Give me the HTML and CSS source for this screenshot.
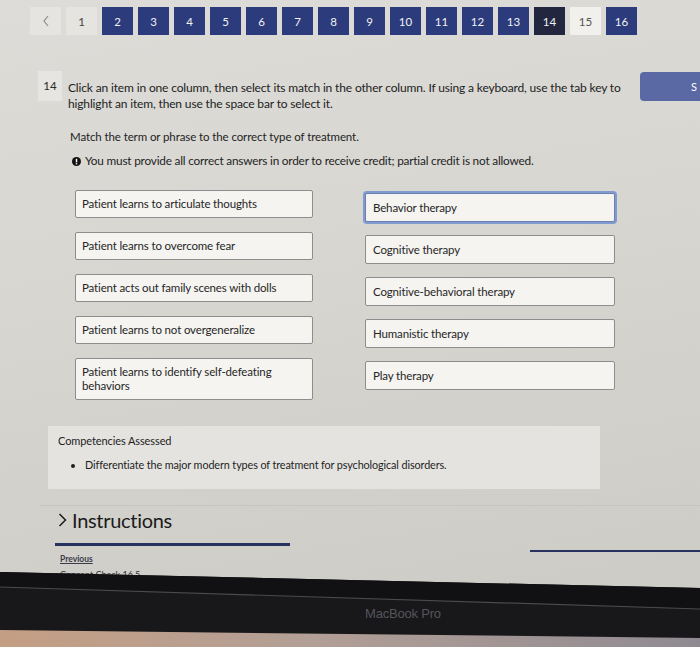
FILE: index.html
```html
<!DOCTYPE html>
<html lang="en">
<head>
<meta charset="utf-8">
<title>Question 14</title>
<link rel="stylesheet" href="styles.css">
</head>
<body>
<div class="screen">
  <nav class="pager">
    <span class="pg pg-light pg-prev"><svg width="8" height="12" viewBox="0 0 8 12"><polyline points="6,1 2,6 6,11" fill="none" stroke="#8a8a8a" stroke-width="1.2"/></svg></span>
    <span class="pg pg-light">1</span>
    <span class="pg">2</span>
    <span class="pg">3</span>
    <span class="pg">4</span>
    <span class="pg">5</span>
    <span class="pg">6</span>
    <span class="pg">7</span>
    <span class="pg">8</span>
    <span class="pg">9</span>
    <span class="pg">10</span>
    <span class="pg">11</span>
    <span class="pg">12</span>
    <span class="pg">13</span>
    <span class="pg pg-current">14</span>
    <span class="pg pg-white">15</span>
    <span class="pg">16</span>
  </nav>

  <section class="question">
    <div class="qnum">14</div>
    <div class="qbody">
      <p class="prompt">Click an item in one column, then select its match in the other column. If using a keyboard, use the tab key to highlight an item, then use the space bar to select it.</p>
      <p class="instr">Match the term or phrase to the correct type of treatment.</p>
      <p class="note"><svg class="note-icon" width="9" height="9" viewBox="0 0 10 10"><circle cx="5" cy="5" r="5" fill="#111"/><rect x="4.2" y="2" width="1.6" height="4" fill="#fff"/><rect x="4.2" y="6.9" width="1.6" height="1.4" fill="#fff"/></svg>You must provide all correct answers in order to receive credit; partial credit is not allowed.</p>
      <div class="match">
        <div class="col col-left">
          <div class="item">Patient learns to articulate thoughts</div>
          <div class="item">Patient learns to overcome fear</div>
          <div class="item">Patient acts out family scenes with dolls</div>
          <div class="item">Patient learns to not overgeneralize</div>
          <div class="item item-tall">Patient learns to identify self-defeating behaviors</div>
        </div>
        <div class="col col-right">
          <div class="item item-focus">Behavior therapy</div>
          <div class="item">Cognitive therapy</div>
          <div class="item">Cognitive-behavioral therapy</div>
          <div class="item">Humanistic therapy</div>
          <div class="item">Play therapy</div>
        </div>
      </div>
    </div>
    <div class="side-btn">S</div>
  </section>

  <section class="competencies">
    <p class="comp-title">Competencies Assessed</p>
    <ul class="comp-list">
      <li>Differentiate the major modern types of treatment for psychological disorders.</li>
    </ul>
  </section>

  <div class="sep"></div>

  <section class="instructions">
    <h2 class="instr-head"><svg class="chev" width="9" height="16" viewBox="0 0 9 16"><polyline points="1.5,2 7.5,8 1.5,14" fill="none" stroke="#1c1c1c" stroke-width="1.5"/></svg>Instructions</h2>
    <div class="bars"><span class="bar bar-left"></span><span class="bar bar-right"></span></div>
    <a class="prev" href="#">Previous</a>
    <div class="concept">Concept Check 16.5</div>
  </section>

  <div class="bezel">
    <svg class="bezel-art" width="700" height="80" viewBox="0 0 700 80">
      <defs>
        <linearGradient id="strip" x1="0" y1="0" x2="1" y2="0">
          <stop offset="0" stop-color="#c49e83"/>
          <stop offset="0.45" stop-color="#b29f96"/>
          <stop offset="1" stop-color="#8f8a92"/>
        </linearGradient>
      </defs>
      <polygon points="0,3 700,19 700,80 0,80" fill="#18181a"/>
      <polygon points="0,3 700,19 700,40 0,18" fill="#111113"/>
      <polyline points="0,18 700,40" fill="none" stroke="#4a4a4d" stroke-width="1.2"/>
      <polygon points="0,61 700,69 700,80 0,80" fill="url(#strip)"/>
    </svg>
    <span class="bezel-label">MacBook Pro</span>
  </div>
</div>
</body>
</html>
```

FILE: styles.css
```css
* { box-sizing: border-box; }

html, body {
  margin: 0;
  padding: 0;
}

body {
  width: 700px;
  height: 647px;
  overflow: hidden;
  font-family: "Lato", "Open Sans", sans-serif;
  color: #1e1e1e;
}

.screen {
  position: relative;
  width: 700px;
  height: 647px;
  overflow: hidden;
  background: linear-gradient(170deg, #dddcd8 0%, #d6d5d0 45%, #cbcac5 100%);
}

/* pager */
.pager {
  display: flex;
  gap: 5px;
  padding: 7px 0 0 30px;
}

.pg {
  width: 31px;
  height: 28px;
  display: flex;
  align-items: center;
  justify-content: center;
  background: #2c3b7b;
  color: #f2f2f4;
  font-size: 11.5px;
}

.pg-light {
  background: #e5e4e0;
  color: #444;
}

.pg-white {
  background: #f1f0ed;
  color: #555;
}

.pg-current {
  background: #22273f;
}

/* question */
.question {
  display: flex;
  align-items: flex-start;
  margin-top: 35px;
  padding-left: 38px;
}

.qnum {
  flex: 0 0 24px;
  height: 30px;
  background: #e6e5e1;
  display: flex;
  justify-content: center;
  padding-top: 8px;
  font-size: 11.5px;
  color: #2a2a2a;
  margin-top: 1px;
}

.qbody {
  flex: 0 0 570px;
  margin-left: 6px;
  padding-top: 10px;
}

.prompt {
  margin: 0;
  width: 565px;
  font-size: 12px;
  line-height: 16px;
  letter-spacing: -0.15px;
  color: #222;
}

.instr {
  margin: 17px 0 0 2px;
  font-size: 11.5px;
  line-height: 16px;
  letter-spacing: -0.1px;
}

.note {
  margin: 8px 0 0 4px;
  font-size: 11.8px;
  line-height: 16px;
  letter-spacing: -0.2px;
  display: flex;
  align-items: center;
}

.note-icon {
  margin-right: 4px;
}

.match {
  display: flex;
  gap: 52px;
  margin: 21px 0 0 7px;
}

.col {
  display: flex;
  flex-direction: column;
  gap: 14px;
}

.col-left { width: 238px; }

.col-right {
  width: 250px;
  padding-top: 3px;
  gap: 13px;
}

.item {
  height: 29px;
  display: flex;
  align-items: center;
  padding: 0 6px;
  background: #f5f4f1;
  border: 1px solid #8d8d8d;
  border-radius: 2px;
  font-size: 11.5px;
  line-height: 14px;
  letter-spacing: -0.15px;
  color: #262626;
}

.col-right .item { padding-left: 7px; }

.col-left .item { height: 28px; }

.col-left .item-tall {
  height: 42px;
  padding-right: 40px;
}

.item-focus {
  border: 1px solid #6b7fb0;
  box-shadow: 0 0 0 2px #7f9bd0;
}

.side-btn {
  flex: 0 0 70px;
  height: 29px;
  margin: 2px -10px 0 auto;
  background: #5a69a4;
  border-radius: 4px;
  color: #fff;
  font-size: 11px;
  display: flex;
  align-items: center;
  padding-left: 51px;
}

/* competencies */
.competencies {
  margin: 26px 0 0 48px;
  width: 552px;
  height: 63px;
  background: #e4e3df;
  padding: 8px 10px 0 10px;
}

.comp-title {
  margin: 0;
  font-size: 11px;
  line-height: 14px;
  letter-spacing: -0.1px;
}

.comp-list {
  margin: 10px 0 0 0;
  padding-left: 27px;
  font-size: 10.8px;
  line-height: 14px;
  letter-spacing: -0.1px;
}

.sep {
  height: 1px;
  margin: 16px 0 0 40px;
  background: #c6c5c0;
}

/* instructions */
.instructions {
  padding-left: 55px;
}

.instr-head {
  margin: 1px 0 0 3px;
  display: flex;
  align-items: center;
  gap: 5px;
  font-size: 20px;
  font-weight: 400;
  line-height: 26px;
  letter-spacing: -0.3px;
  color: #1b1b1b;
}

.bars {
  display: flex;
  align-items: flex-start;
  margin-top: 10px;
}

.bar {
  flex: 0 0 auto;
  height: 3px;
  background: #27325f;
}

.bar-left { width: 235px; }

.bar-right {
  width: 180px;
  margin: 7px 0 0 240px;
  height: 2px;
}

.prev {
  display: block;
  margin: 2px 0 0 5px;
  width: max-content;
  font-size: 8.5px;
  font-weight: 700;
  color: #3b3c4c;
}

.concept {
  margin: 5px 0 0 5px;
  font-size: 9px;
  color: #333;
}

/* laptop bezel from the photo, lies over the page bottom */
.bezel {
  position: absolute;
  left: 0;
  top: 569px;
  width: 700px;
  height: 80px;
}

.bezel-art {
  display: block;
}

.bezel-label {
  position: absolute;
  left: 365px;
  top: 37px;
  font-family: "Liberation Sans", sans-serif;
  font-size: 13px;
  letter-spacing: -0.2px;
  color: #55555a;
}
```
